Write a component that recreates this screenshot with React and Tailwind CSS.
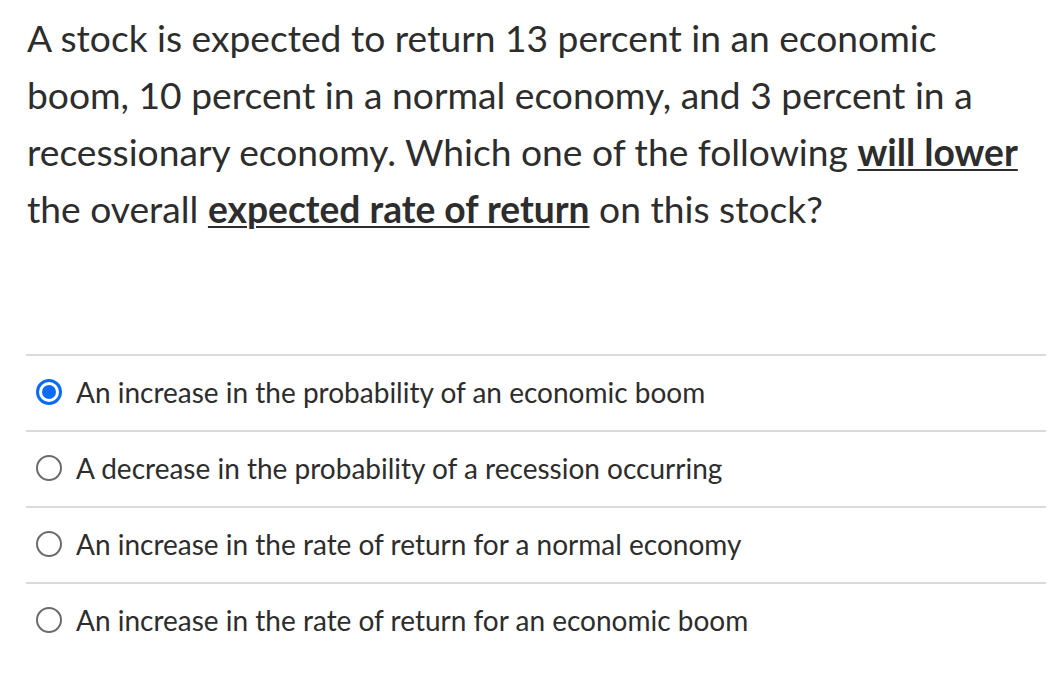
import React from "react";

const options = [
  "An increase in the probability of an economic boom",
  "A decrease in the probability of a recession occurring",
  "An increase in the rate of return for a normal economy",
  "An increase in the rate of return for an economic boom",
];

function Radio({ checked }) {
  if (checked) {
    return (
      <span className="flex h-[26px] w-[26px] shrink-0 items-center justify-center rounded-full border-[3px] border-[#0a6cf5] bg-white">
        <span className="h-[14px] w-[14px] rounded-full bg-[#0a6cf5]" />
      </span>
    );
  }
  return (
    <span className="h-[26px] w-[26px] shrink-0 rounded-full border-2 border-[#6b6b6b] bg-white" />
  );
}

export default function App() {
  return (
    <div className="min-h-[676px] w-[1060px] bg-white pl-[27px] pr-[14px] pt-[9px] font-['Lato','Liberation_Sans',sans-serif] text-[#2d2d2d]">
      <p className="text-[37.2px] leading-[57px]">
        A stock is expected to return 13 percent in an economic boom, 10 percent in a normal economy, and 3 percent in a recessionary economy. Which one of the following{" "}
        <span className="font-bold underline decoration-2 underline-offset-[3px]">will lower</span> the overall{" "}
        <span className="font-bold underline decoration-2 underline-offset-[3px]">expected rate of return</span> on this stock?
      </p>
      <div className="mt-[117px] -ml-px">
        {options.map((o, i) => (
          <div key={i} className="flex h-[76px] items-center gap-[14px] border-t-2 border-[#dadada] pb-[3px] pl-[10px]">
            <Radio checked={i === 0} />
            <span className="text-[28px]">{o}</span>
          </div>
        ))}
      </div>
    </div>
  );
}
